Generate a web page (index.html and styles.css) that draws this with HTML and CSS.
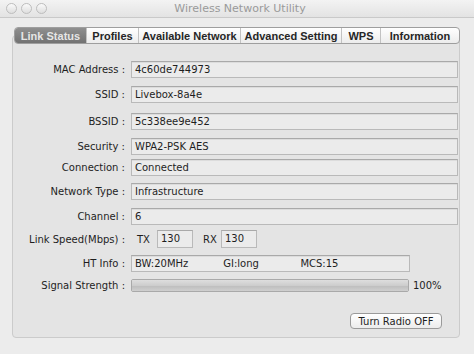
FILE: index.html
```html
<!DOCTYPE html>
<html lang="en">
<head>
    <meta charset="UTF-8">
    <title>Wireless Network Utility</title>
    <link rel="stylesheet" href="styles.css">
</head>
<body>
    <div class="titlebar">
        <div class="lights">
            <span class="light"></span>
            <span class="light"></span>
            <span class="light"></span>
        </div>
        <div class="title">Wireless Network Utility</div>
    </div>
    <div class="frame">
        <div class="tabs">
            <div class="tab selected">Link Status</div>
            <div class="tab">Profiles</div>
            <div class="tab">Available Network</div>
            <div class="tab">Advanced Setting</div>
            <div class="tab">WPS</div>
            <div class="tab">Information</div>
        </div>
        <div class="panel">
            <div class="row r-mac">
                <div class="label">MAC Address :</div>
                <div class="field">4c60de744973</div>
            </div>
            <div class="row r-ssid">
                <div class="label">SSID :</div>
                <div class="field">Livebox-8a4e</div>
            </div>
            <div class="row r-bssid">
                <div class="label">BSSID :</div>
                <div class="field">5c338ee9e452</div>
            </div>
            <div class="row r-sec">
                <div class="label">Security :</div>
                <div class="field">WPA2-PSK AES</div>
            </div>
            <div class="row r-conn">
                <div class="label">Connection :</div>
                <div class="field">Connected</div>
            </div>
            <div class="row r-type">
                <div class="label">Network Type :</div>
                <div class="field">Infrastructure</div>
            </div>
            <div class="row r-chan">
                <div class="label">Channel :</div>
                <div class="field">6</div>
            </div>
            <div class="row r-speed">
                <div class="label">Link Speed(Mbps) :</div>
                <div class="speed">
                    <span class="unit">TX</span>
                    <div class="field small">130</div>
                    <span class="unit rx">RX</span>
                    <div class="field small">130</div>
                </div>
            </div>
            <div class="row r-ht">
                <div class="label">HT Info :</div>
                <div class="field short ht">
                    <span class="bw">BW:20MHz</span>
                    <span class="gi">GI:long</span>
                    <span>MCS:15</span>
                </div>
            </div>
            <div class="row r-signal">
                <div class="label">Signal Strength :</div>
                <div class="signal">
                    <div class="bar"><div class="fill" style="width: 100%"></div></div>
                    <span class="pct">100%</span>
                </div>
            </div>
            <div class="actions">
                <button class="btn">Turn Radio OFF</button>
            </div>
        </div>
    </div>
</body>
</html>
```

FILE: styles.css
```css
body {
    margin: 0;
    width: 474px;
    height: 354px;
    overflow: hidden;
    background: #ececec;
    font-family: 'DejaVu Sans', sans-serif;
    font-size: 10px;
    color: #1e1e1e;
}
.titlebar {
    height: 17px;
    display: flex;
    align-items: center;
    background: linear-gradient(#f3f3f3, #e3e3e3);
    border-bottom: 1px solid #c9c9c9;
}
.lights {
    display: flex;
    gap: 4px;
    padding-left: 6px;
    width: 80px;
}
.light {
    width: 9px;
    height: 9px;
    border-radius: 50%;
    border: 1px solid #bdbdbd;
    background: linear-gradient(#fafafa, #dedede);
}
.title {
    flex: 1;
    text-align: center;
    margin-right: 80px;
    color: #9a9a9a;
    font-size: 11px;
}
.frame {
    padding: 9px 14px 0 12px;
}
.tabs {
    display: flex;
    margin: 0 0 0 2px;
    height: 15px;
    border: 1px solid #9e9e9e;
    border-radius: 4px;
    background: linear-gradient(#ffffff, #ececec);
    overflow: hidden;
    position: relative;
    z-index: 1;
    font-family: 'Liberation Sans', sans-serif;
    font-weight: bold;
    font-size: 11px;
}
.tab {
    display: flex;
    align-items: center;
    justify-content: center;
    white-space: nowrap;
    border-left: 1px solid #c2c2c2;
    color: #262626;
}
.tab:nth-child(1) { width: 71px; border-left: none; }
.tab:nth-child(2) { width: 51px; }
.tab:nth-child(3) { width: 101px; }
.tab:nth-child(4) { width: 100px; }
.tab:nth-child(5) { width: 38px; }
.tab:nth-child(6) { flex: 1; }
.tab.selected {
    background: linear-gradient(#8f8f8f, #727272);
    color: #e6e6e6;
}
.panel {
    margin-top: -9px;
    height: 303px;
    box-sizing: border-box;
    border: 1px solid #cbcbcb;
    border-radius: 4px;
    background: #e4e4e4;
    padding: 25px 1px 0 0;
}
.row {
    display: grid;
    grid-template-columns: 118px 1fr;
    align-items: center;
}
.label {
    text-align: right;
    padding-right: 6px;
    white-space: nowrap;
}
.field {
    height: 15px;
    line-height: 15px;
    border: 1px solid #b9b9b9;
    border-top-color: #a9a9a9;
    background: #ebebeb;
    box-shadow: inset 0 1px 0 #dcdcdc;
    padding-left: 3px;
    white-space: nowrap;
}
.r-ssid { margin-top: 8px; }
.r-bssid { margin-top: 10px; }
.r-sec { margin-top: 8px; }
.r-conn { margin-top: 4px; }
.r-type { margin-top: 7px; }
.r-chan { margin-top: 8px; }
.r-speed { margin-top: 5px; }
.r-ht { margin-top: 7px; }
.r-signal { margin-top: 7px; }
.speed {
    display: flex;
    align-items: center;
}
.unit {
    margin-left: 6px;
    width: 20px;
}
.unit.rx {
    margin-left: 10px;
    width: 18px;
}
.field.small {
    width: 31px;
    height: 16px;
    line-height: 16px;
    box-shadow: none;
}
.field.short {
    width: 274px;
}
.ht .bw { display: inline-block; width: 85px; }
.ht .gi { display: inline-block; width: 74px; }
.signal {
    display: flex;
    align-items: center;
    gap: 4px;
}
.bar {
    width: 276px;
    height: 11px;
    border: 1px solid #a9a9a9;
    border-radius: 2px;
    background: #e9e9e9;
    overflow: hidden;
}
.fill {
    height: 100%;
    background: linear-gradient(#dedede, #cdcdcd 50%, #bdbdbd 51%, #cfcfcf);
}
.actions {
    display: flex;
    justify-content: flex-end;
    padding-right: 16px;
    margin-top: 21px;
}
.btn {
    width: 92px;
    height: 16px;
    padding: 0;
    font-family: 'DejaVu Sans', sans-serif;
    font-size: 10px;
    color: #1e1e1e;
    border: 1px solid #9a9a9a;
    border-radius: 4px;
    background: linear-gradient(#ffffff, #ececec);
}
```
